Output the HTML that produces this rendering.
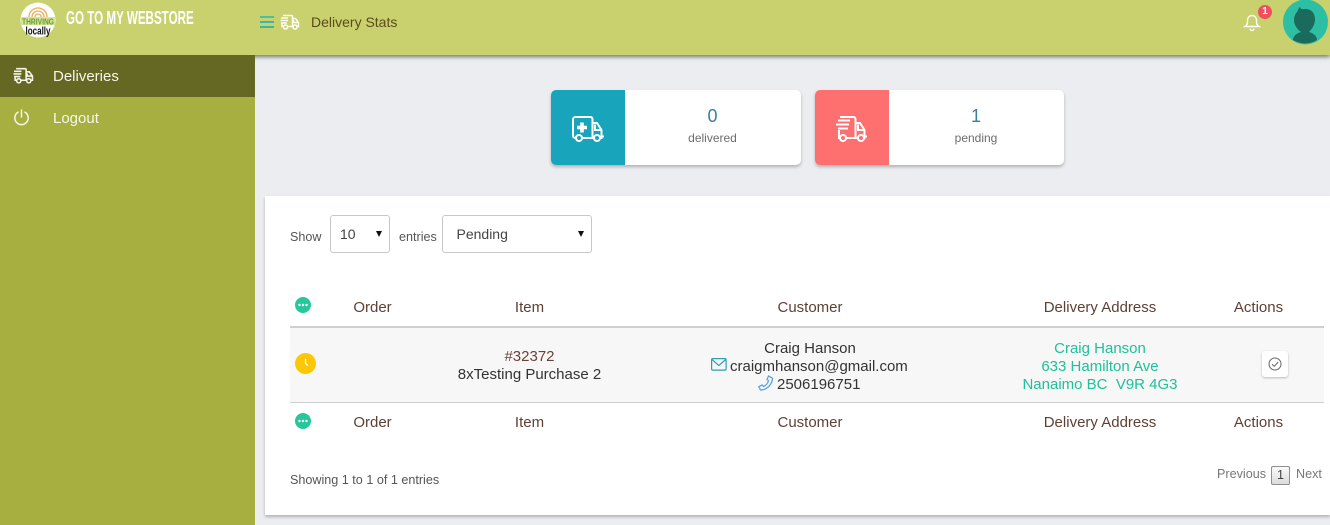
<!DOCTYPE html>
<html><head><meta charset="utf-8"><style>
html,body{margin:0;padding:0}
body{width:1330px;height:525px;overflow:hidden;position:relative;background:#ebedf1;font-family:"Liberation Sans",sans-serif;font-size:14px}
.a{position:absolute;white-space:nowrap}
.c{text-align:center;transform:translateX(-50%)}
.th{font-size:15px;color:#5f4034;line-height:18px}
.td{font-size:15px;color:#333;line-height:18px}
svg{position:absolute;overflow:visible}
.sel{position:absolute;background:#fff;border:1px solid #c8c8c8;border-radius:3px;box-sizing:border-box;color:#444;font-size:14px}
</style></head><body>
<div class="a" style="left:0;top:0;width:1330px;height:55px;background:#c8d16d;box-shadow:0 2px 4px rgba(40,40,40,.6)"></div>
<div class="a" style="left:0;top:0;width:255px;height:55px;background:#c8d16d"></div>
<div class="a" style="left:0;top:55px;width:255px;height:42px;background:#656823"></div>
<div class="a" style="left:0;top:97px;width:255px;height:428px;background:#a7af41"></div>

<svg style="left:20px;top:2px" width="37" height="36" viewBox="0 0 37 36">
<circle cx="18" cy="18" r="17.500" fill="#fff"/>
<path d="M9 15a9 9 0 0 1 18 0M12 15a6 6 0 0 1 12 0M15 15a3 3 0 0 1 6 0" fill="none" stroke="#eeaa55" stroke-width="1.300"/>
<rect x="1" y="15" width="34" height="8" fill="#d3e69a"/>
<text x="18" y="22.500" text-anchor="middle" font-family="Liberation Sans" font-size="8.500" font-weight="700" fill="#6d9a2e" textLength="32" lengthAdjust="spacingAndGlyphs">THRIVING</text>
<text x="18" y="32.500" text-anchor="middle" font-family="Liberation Sans" font-size="11" font-weight="700" fill="#111" textLength="25" lengthAdjust="spacingAndGlyphs">locally</text>
</svg>
<div class="a" style="left:66px;top:7px;font-size:18px;line-height:22px;font-weight:700;color:#fff;transform-origin:0 0;transform:scaleX(.645)">GO TO MY WEBSTORE</div>

<div class="a" style="left:260px;top:16px;width:14px;height:1.500px;background:#4fbd9f"></div>
<div class="a" style="left:260px;top:21px;width:14px;height:1.500px;background:#3fb5a5"></div>
<div class="a" style="left:260px;top:26px;width:14px;height:1.500px;background:#3fb59b"></div>
<svg style="left:280px;top:14px" width="20" height="16" viewBox="0 0 20 16" fill="none" stroke="#fdfdf0" stroke-width="1.500">
<path d="M3 1.500H11.500a1 1 0 0 1 1 1V12.500H7.500M3.500 12.500H2V9M12.500 4.500H15.500L18.500 8.500V12.500H17M13.500 12.500H12.500M13.500 6V8.500H18.500"/><circle cx="5.500" cy="13" r="2"/><circle cx="15" cy="13" r="2"/>
<path d="M1 4H8M0.500 6.500H8M1 9H7"/></svg>
<div class="a" style="left:311px;top:13px;font-size:14px;line-height:18px;color:#5b4a1a">Delivery Stats</div>

<svg style="left:1244px;top:13px" width="16" height="18" viewBox="0 0 16 18" fill="none" stroke="#fff" stroke-width="1.400">
<path d="M1 13.500c1.500-1 2.500-2 2.500-4.500V7a4.500 4.500 0 0 1 9 0v2c0 2.500 1 3.500 2.500 4.500z"/><path d="M6 15.500a2 2 0 0 0 4 0"/></svg>
<div class="a" style="left:1258px;top:5px;width:14px;height:14px;border-radius:50%;background:#ef4f5f;color:#fff;font-size:10px;line-height:14px;font-weight:700;text-align:center">1</div>
<svg style="left:1283px;top:0" width="47" height="45" viewBox="0 0 47 45">
<circle cx="22.500" cy="22" r="22.500" fill="#2dbfa3"/>
<clipPath id="av"><circle cx="22.500" cy="22" r="22.500"/></clipPath>
<path clip-path="url(#av)" d="M13 13C15 12 15 8 17 7C18 10 20 9 23 9C28 9 32 13 32 19C32 25 29 29 26 32C30 33 34 36 34 40Q22 47 10 40C10 36 14 33 18 32C14 29 11 25 11 20C11 17 12 15 13 13Z" fill="#1a6b5b"/></svg>

<svg style="left:13px;top:67px" width="21" height="17" viewBox="0 0 20 16" fill="none" stroke="#f6f6e6" stroke-width="1.500">
<path d="M3 1.500H11.500a1 1 0 0 1 1 1V12.500H7.500M3.500 12.500H2V9M12.500 4.500H15.500L18.500 8.500V12.500H17M13.500 12.500H12.500M13.500 6V8.500H18.500"/><circle cx="5.500" cy="13" r="2"/><circle cx="15" cy="13" r="2"/>
<path d="M1 4H8M0.500 6.500H8M1 9H7"/></svg>
<div class="a" style="left:53px;top:68px;font-size:15px;line-height:18px;color:#f6f6ea">Deliveries</div>
<svg style="left:13px;top:109px" width="17" height="17" viewBox="0 0 17 17" fill="none" stroke="#f6f6e6" stroke-width="1.500" stroke-linecap="round">
<path d="M5 3.200a6.700 6.700 0 1 0 7 0M8.500 1V8"/></svg>
<div class="a" style="left:53px;top:110px;font-size:15px;line-height:18px;color:#f6f6ea">Logout</div>

<div class="a" style="left:551px;top:90px;width:250px;height:75px;background:#fff;border-radius:5px;box-shadow:0 2px 3px rgba(0,0,0,.25);overflow:hidden"><div style="width:74px;height:75px;background:#18a4ba"></div></div>
<svg style="left:571px;top:115px" width="34" height="27" viewBox="0 0 34 27" fill="none" stroke="#fff" stroke-width="2">
<path d="M5 23H4.500a2.500 2.500 0 0 1-2.500-2.500V4.500A2.500 2.500 0 0 1 4.500 2H19.500a2 2 0 0 1 2 2V23H11M21.500 8H26L30.500 15V23H29M21.500 23H23M24 9.500V15H30.500M30.500 21.500H33"/>
<circle cx="8" cy="23" r="3"/><circle cx="26" cy="23" r="3"/>
<path d="M11 7.500V17.500M6 12.500H16" stroke-width="3.600"/></svg>
<div class="a c" style="left:712.500px;top:105px;font-size:18px;line-height:22px;color:#3b7f9f">0</div>
<div class="a c" style="left:712.500px;top:131px;font-size:12px;line-height:15px;color:#6d6d6d">delivered</div>

<div class="a" style="left:815px;top:90px;width:249px;height:75px;background:#fff;border-radius:5px;box-shadow:0 2px 3px rgba(0,0,0,.25);overflow:hidden"><div style="width:74px;height:75px;background:#fe6f6f"></div></div>
<svg style="left:834px;top:115px" width="34" height="27" viewBox="0 0 34 27" fill="none" stroke="#fff" stroke-width="2">
<path d="M6 2H19.500a2 2 0 0 1 2 2V23H12M6 23H5V15M21.500 8H26L30.500 15V23H30M21.500 23H23M24 9.500V15H30.500M30.500 21.500H33"/>
<circle cx="9" cy="23" r="3"/><circle cx="27" cy="23" r="3"/>
<path d="M4 5.500H16M2 9.500H15M4 13.500H14"/></svg>
<div class="a c" style="left:976px;top:105px;font-size:18px;line-height:22px;color:#3b7f9f">1</div>
<div class="a c" style="left:976px;top:131px;font-size:12px;line-height:15px;color:#6d6d6d">pending</div>

<div class="a" style="left:265px;top:196px;width:1065px;height:319px;background:#fff;box-shadow:0 2px 3px rgba(0,0,0,.25)"></div>

<div class="a" style="left:290px;top:230px;font-size:12.600px;line-height:15px;color:#555">Show</div>
<div class="sel" style="left:330px;top:215px;width:60px;height:38px"></div>
<div class="a" style="left:340px;top:225px;font-size:14px;line-height:18px;color:#444">10</div>
<div class="a" style="left:376px;top:231px;border-left:3.500px solid transparent;border-right:3.500px solid transparent;border-top:6px solid #111"></div>
<div class="a" style="left:399px;top:230px;font-size:12.600px;line-height:15px;color:#555">entries</div>
<div class="sel" style="left:442px;top:215px;width:150px;height:38px"></div>
<div class="a" style="left:456.500px;top:225px;font-size:14px;line-height:18px;color:#444">Pending</div>
<div class="a" style="left:578px;top:231px;border-left:3.500px solid transparent;border-right:3.500px solid transparent;border-top:6px solid #111"></div>

<svg style="left:295px;top:297px" width="16" height="16" viewBox="0 0 16 16"><circle cx="8" cy="8" r="8" fill="#26c79b"/><circle cx="4.500" cy="8" r="1.200" fill="#fff"/><circle cx="8" cy="8" r="1.200" fill="#fff"/><circle cx="11.500" cy="8" r="1.200" fill="#fff"/></svg>
<div class="a c th" style="left:372.500px;top:299px">Order</div>
<div class="a c th" style="left:529.500px;top:299px">Item</div>
<div class="a c th" style="left:810px;top:299px">Customer</div>
<div class="a c th" style="left:1100px;top:299px">Delivery Address</div>
<div class="a c th" style="left:1258.500px;top:299px">Actions</div>

<div class="a" style="left:290px;top:326px;width:1034px;height:2px;background:#cfcfcf"></div>
<div class="a" style="left:290px;top:328px;width:1034px;height:74px;background:#f7f7f7"></div>
<div class="a" style="left:290px;top:402px;width:1034px;height:1px;background:#cfcfcf"></div>

<svg style="left:295px;top:353px" width="21" height="21" viewBox="0 0 21 21"><circle cx="10.500" cy="10.500" r="10.500" fill="#fbc707"/><path d="M10.500 6V10.500L13 12.500" fill="none" stroke="#fff" stroke-width="1.300"/></svg>
<div class="a c" style="left:529.500px;top:348px;font-size:15px;line-height:18px;color:#6a4238">#32372</div>
<div class="a c td" style="left:529.500px;top:366px">8xTesting Purchase 2</div>
<div class="a c td" style="left:810px;top:340px">Craig Hanson</div>
<div class="a td" style="left:730px;top:358px">craigmhanson@gmail.com</div>
<svg style="left:711px;top:358px" width="16" height="13" viewBox="0 0 16 13" fill="none" stroke="#2e9fb0" stroke-width="1.200"><rect x=".6" y=".6" width="14.500" height="11.500" rx="1.200"/><path d="M1 1.500L7.800 7.500L14.800 1.500"/></svg>
<div class="a td" style="left:777px;top:376px">2506196751</div>
<svg style="left:758px;top:375px" width="16" height="16" viewBox="0 0 16 16" fill="none" stroke="#5da3e0" stroke-width="1.300"><path d="M10.500 1L14.500 3.200C14.500 9 9 15 2.500 15L.8 11.800L4.200 10L5.500 11.500C8 10.500 10 8 10.500 5.500L9 4.500Z"/></svg>
<div class="a c" style="left:1100px;top:340px;font-size:15px;line-height:18px;color:#1fc09a">Craig Hanson</div>
<div class="a c" style="left:1100px;top:358px;font-size:15px;line-height:18px;color:#1fc09a">633 Hamilton Ave</div>
<div class="a c" style="left:1100px;top:376px;font-size:15px;line-height:18px;color:#1fc09a;white-space:pre">Nanaimo BC  V9R 4G3</div>
<div class="a" style="left:1262px;top:351px;width:26px;height:26px;background:#fff;border-radius:3px;box-shadow:0 1px 2px rgba(0,0,0,.25)"></div>
<svg style="left:1268px;top:357px" width="14" height="14" viewBox="0 0 14 14" fill="none" stroke="#666" stroke-width="1"><circle cx="7" cy="7" r="6"/><path d="M4 7.300L6.200 9.300L10.200 5"/></svg>

<svg style="left:295px;top:413px" width="16" height="16" viewBox="0 0 16 16"><circle cx="8" cy="8" r="8" fill="#26c79b"/><circle cx="4.500" cy="8" r="1.200" fill="#fff"/><circle cx="8" cy="8" r="1.200" fill="#fff"/><circle cx="11.500" cy="8" r="1.200" fill="#fff"/></svg>
<div class="a c th" style="left:372.500px;top:414px">Order</div>
<div class="a c th" style="left:529.500px;top:414px">Item</div>
<div class="a c th" style="left:810px;top:414px">Customer</div>
<div class="a c th" style="left:1100px;top:414px">Delivery Address</div>
<div class="a c th" style="left:1258.500px;top:414px">Actions</div>

<div class="a" style="left:290px;top:473px;font-size:12.600px;line-height:15px;color:#555">Showing 1 to 1 of 1 entries</div>
<div class="a" style="left:1217px;top:467px;font-size:12.600px;line-height:15px;color:#777">Previous</div>
<div class="a" style="left:1271px;top:466px;width:19px;height:19px;box-sizing:border-box;border:1px solid #8f8f8f;border-radius:2px;background:linear-gradient(#fafafa,#dcdcdc);font-size:12.600px;line-height:17px;text-align:center;color:#444">1</div>
<div class="a" style="left:1296px;top:467px;font-size:12.600px;line-height:15px;color:#777">Next</div>
</body></html>
